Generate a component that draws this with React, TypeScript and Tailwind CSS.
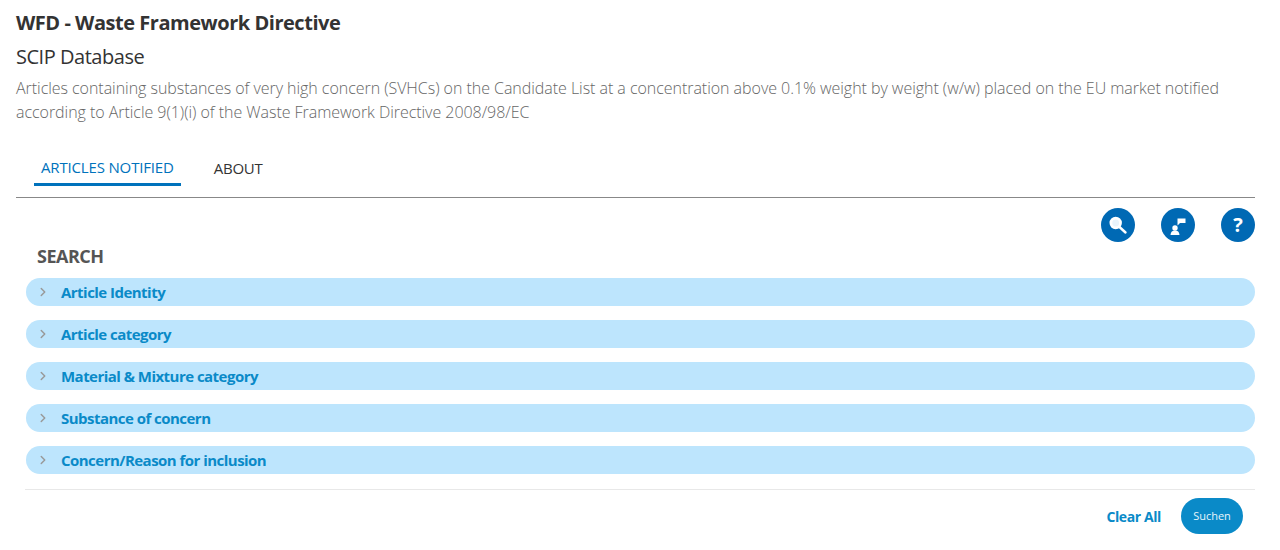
import React from 'react';
import { ChevronRight } from 'lucide-react';

const sections = [
  'Article Identity',
  'Article category',
  'Material & Mixture category',
  'Substance of concern',
  'Concern/Reason for inclusion',
];

const SearchIcon = () => (
  <svg viewBox="0 0 34 34" className="h-[34px] w-[34px]">
    <circle cx="17" cy="17" r="17" fill="#0069b4" />
    <circle cx="14.700" cy="15" r="4.800" fill="#eaf4fb" stroke="#fff" strokeWidth="2.800" />
    <path d="M18.500 19l6 5.500" stroke="#fff" strokeWidth="2.400" strokeLinecap="round" />
  </svg>
);

const ContactIcon = () => (
  <svg viewBox="0 0 34 34" className="h-[34px] w-[34px]">
    <circle cx="17" cy="17" r="17" fill="#0069b4" />
    <path d="M16.500 10.500h8v4.500h-5.500l-2.500 2.500z" fill="#fff" />
    <circle cx="14" cy="20" r="2.700" fill="#fff" />
    <path d="M9.500 27c.2-3.200 1.800-4.500 4.500-4.500s4.300 1.300 4.500 4.500z" fill="#fff" />
  </svg>
);

const HelpIcon = () => (
  <div className="flex h-[34px] w-[34px] items-center justify-center rounded-full bg-[#0069b4] text-[20px] leading-none font-bold text-white">
    ?
  </div>
);

export default function App() {
  return (
    <div className="h-[550px] w-[1280px] overflow-hidden bg-white pt-[10px] pr-[25px] pl-4 font-['Open_Sans',sans-serif]">
      <h1 className="text-[20px] leading-[26px] font-bold tracking-[-0.47px] text-[#333]">
        WFD - Waste Framework Directive
      </h1>
      <h2 className="mt-[8px] text-[20px] leading-[26px] tracking-[-0.47px] text-[#333]">SCIP Database</h2>
      <p className="mt-[6px] text-[16px] leading-6 font-light tracking-[-0.04px] text-[#666]">
        Articles containing substances of very high concern (SVHCs) on the Candidate List at a concentration above 0.1% weight by weight (w/w) placed on the EU market notified according to Article 9(1)(i) of the Waste Framework Directive 2008/98/EC
      </p>

      {/* Tabs */}
      <div className="mt-[24px] flex h-[50px] items-start border-b border-[#888] pl-[18px]">
        <div className="flex h-[38px] items-center border-b-[3px] border-[#0072bc] px-[7px] pt-[3px] text-[15px] tracking-[-0.16px] text-[#0072bc]">
          ARTICLES NOTIFIED
        </div>
        <div className="ml-[33px] flex h-[38px] items-center pt-[3px] text-[15px] tracking-[-0.25px] text-[#333]">
          ABOUT
        </div>
      </div>

      <div className="mt-[10px] flex justify-end gap-[26px]">
        <SearchIcon />
        <ContactIcon />
        <HelpIcon />
      </div>

      <div className="mt-[2px] pl-[21px] text-[18px] leading-6 font-bold tracking-[-0.5px] text-[#555]">SEARCH</div>

      <div className="mt-[10px] ml-[10px] flex flex-col gap-[14px]">
        {sections.map(name => (
          <div key={name} className="flex h-[28px] items-center rounded-full bg-[#bde5fd] pl-[10px]">
            <ChevronRight className="h-3.5 w-3.5 text-[#999]" strokeWidth={2.5} />
            <span className="ml-[11px] text-[15px] font-bold tracking-[-0.53px] text-[#0a8ac8]">{name}</span>
          </div>
        ))}
      </div>

      <div className="mt-[15px] ml-[9px] flex h-[53px] items-center justify-end border-t border-[#e8e8e8] pr-[12px]">
        <span className="mt-[1px] text-[14px] font-bold tracking-[-0.4px] text-[#0a8ac8]">Clear All</span>
        <button className="ml-[20px] h-[36px] w-[62px] rounded-[18px] bg-[#0a8ac8] text-[11px] text-[#e6f4fb]">Suchen</button>
      </div>
    </div>
  );
}
